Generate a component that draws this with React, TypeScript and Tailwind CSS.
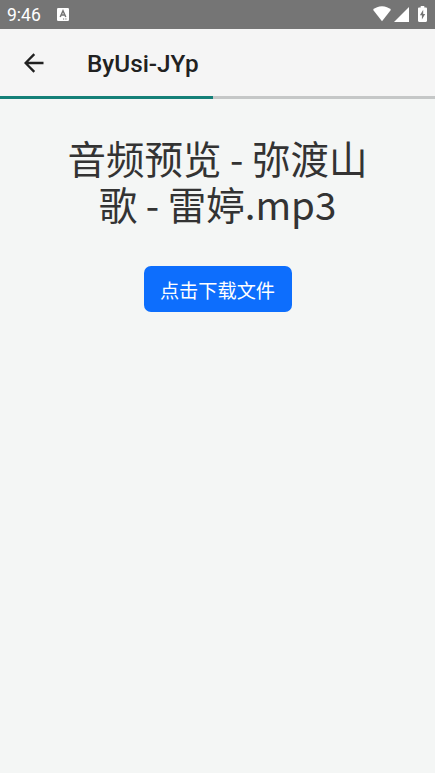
const WifiIcon = () => (
  <svg className="h-[16px] w-[18px]" viewBox="0 0 18 16" fill="#fff">
    <path d="M9 15.2 0 3.7C2.4 1.5 5.5 0.3 9 0.3s6.6 1.2 9 3.4z" />
  </svg>
);

const SignalIcon = () => (
  <svg className="h-[15px] w-[15px]" viewBox="0 0 15 15" fill="#fff">
    <path d="M0 15 15 0v15z" />
  </svg>
);

const BatteryIcon = () => (
  <svg className="h-[16px] w-[9px]" viewBox="0 0 9 16">
    <path
      fill="#fff"
      d="M2.7 0h3.6v1.4h1.5c.7 0 1.2.5 1.2 1.2v12.2c0 .7-.5 1.2-1.2 1.2H1.2C.5 16 0 15.5 0 14.8V2.6c0-.7.5-1.2 1.2-1.2h1.5z"
    />
    <path fill="#757575" d="M5.2 3.8 1.9 9.3h2v4.3l3.300-5.700h-2z" />
  </svg>
);

const KeyboardIcon = () => (
  <svg className="h-[13px] w-[12px]" viewBox="0 0 12 13">
    <rect width="12" height="13" rx="1.2" fill="#fff" />
    <path d="M3.2 9 6 2.8 8.8 9M4.2 7h3.6" fill="none" stroke="#757575" strokeWidth="1.5" />
    <path d="M6 11h1.2M8.3 11h1.2" stroke="#757575" strokeWidth="1" />
  </svg>
);

const StatusBar = () => (
  <div className="flex h-[29px] items-center bg-[#757575] pr-[8px] pl-[7px] text-white">
    <span className="w-[50px] pt-px text-[17.5px] leading-5">9:46</span>
    <KeyboardIcon />
    <div className="ml-auto flex items-center pb-px">
      <WifiIcon />
      <div className="ml-[3px]">
        <SignalIcon />
      </div>
      <div className="ml-[9px]">
        <BatteryIcon />
      </div>
    </div>
  </div>
);

const AppBar = () => (
  <header className="flex h-[67px] items-center bg-[#f5f5f5] pl-[24px] text-[#212121]">
    <button type="button" aria-label="Back" className="h-5 w-5">
      <svg
        className="h-5 w-5"
        viewBox="0 0 20 20"
        fill="none"
        stroke="currentColor"
        strokeWidth="2.3"
      >
        <path d="M19.5 10H1.7M10.3 1.1 1.5 10l8.8 8.9" />
      </svg>
    </button>
    <h1 className="ml-[43px] pt-0.5 text-[24.3px] leading-7 font-medium">ByUsi-JYp</h1>
  </header>
);

export default function App() {
  return (
    <div className="flex h-[773px] w-[435px] flex-col overflow-hidden bg-[#f4f6f5] font-['Roboto','Noto_Sans_CJK_SC',sans-serif]">
      <StatusBar />
      <AppBar />
      <div className="h-[3px] bg-[#c5c7c7]">
        <div className="h-full w-[213px] bg-[#148078]" />
      </div>

      <main className="flex flex-col items-center px-[58px] pt-[35px] font-['Noto_Sans_CJK_SC',sans-serif]">
        <h2 className="text-center text-[38.5px] leading-[46px] text-[#333]">
          音频预览 - 弥渡山
          <br />歌 - 雷婷.mp3
        </h2>
        <button
          type="button"
          className="mt-[40px] h-[46px] w-[148px] rounded-[7px] bg-[#0d6efd] pt-0.5 text-[19.2px] leading-[29px] text-white"
        >
          点击下载文件
        </button>
      </main>
    </div>
  );
}
